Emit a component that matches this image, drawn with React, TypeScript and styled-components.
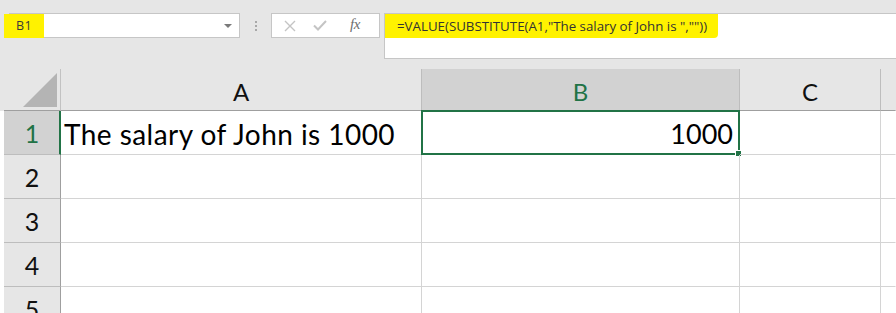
import React from "react";
import styled, { createGlobalStyle } from "styled-components";

const Global = createGlobalStyle`
  html, body {
    margin: 0;
    padding: 0;
    width: 896px;
    height: 313px;
    overflow: hidden;
    background: #e6e6e6;
  }
`;

const GREEN = "#217346";
const HEADER_BG = "#e6e6e6";
const HEADER_SEL = "#d2d2d2";
const GRID_LINE = "#d4d4d4";

const S = {
  Page: styled.div`
    width: 896px;
    height: 313px;
    overflow: hidden;
    font-family: "Open Sans", "Liberation Sans", sans-serif;
  `,
  Toolbar: styled.div`
    height: 69px;
    box-sizing: border-box;
    padding: 13px 0 0 9px;
    display: flex;
    align-items: flex-start;
  `,
  NameBox: styled.div`
    width: 231px;
    height: 25px;
    box-sizing: border-box;
    background: #fff;
    border: 1px solid #c6c6c6;
    display: flex;
    align-items: center;
    justify-content: space-between;
  `,
  NameText: styled.span`
    margin-left: -6px;
    height: 24px;
    width: 40px;
    box-sizing: border-box;
    padding-left: 12px;
    background: #fff200;
    display: flex;
    align-items: center;
    font-size: 12.5px;
    color: #3a3a3a;
    letter-spacing: 0.4px;
  `,
  Caret: styled.span`
    margin-right: 7px;
    width: 0;
    height: 0;
    border-left: 4px solid transparent;
    border-right: 4px solid transparent;
    border-top: 4px solid #7a7a7a;
  `,
  Dots: styled.div`
    width: 31px;
    height: 25px;
    display: flex;
    flex-direction: column;
    align-items: center;
    justify-content: center;
    gap: 2px;
    span {
      width: 2px;
      height: 2px;
      background: #a8a8a8;
    }
  `,
  IconBox: styled.div`
    width: 109px;
    height: 25px;
    box-sizing: border-box;
    background: #fff;
    border: 1px solid #c6c6c6;
    display: flex;
    align-items: center;
    padding-left: 12px;
    gap: 17px;
  `,
  Fx: styled.span`
    margin-left: 6px;
    font-family: "Liberation Serif", "DejaVu Serif", serif;
    font-style: italic;
    font-size: 15px;
    color: #6e6e6e;
    letter-spacing: -0.5px;
    margin-top: -2px;
  `,
  FormulaBox: styled.div`
    margin-left: 4px;
    flex: 1;
    height: 46px;
    box-sizing: border-box;
    background: #fff;
    border: 1px solid #c6c6c6;
    border-right: none;
  `,
  Formula: styled.span`
    display: inline-flex;
    align-items: center;
    height: 24px;
    padding: 0 11px 0 12px;
    background: #fff200;
    border-radius: 0 0 4px 0;
    font-size: 13.3px;
    color: #333;
    white-space: pre;
  `,
  Grid: styled.div`
    display: grid;
    grid-template-columns: 4px 57px 361px 318px 141px 1fr;
    grid-auto-rows: 44px;
    grid-template-rows: 42px;
    background: #fff;
    font-family: "Lato", "Open Sans", sans-serif;
  `,
  Spacer: styled.div<{ $header?: boolean }>`
    background: ${(p) => (p.$header ? HEADER_BG : "#fff")};
  `,
  Corner: styled.div`
    background: ${HEADER_BG};
    border-right: 1px solid #c2c2c2;
    border-bottom: 1px solid #9f9f9f;
    box-sizing: border-box;
    display: flex;
    align-items: flex-end;
    justify-content: flex-end;
    padding: 0 3px 3px 0;
  `,
  ColHead: styled.div<{ $sel?: boolean; $last?: boolean }>`
    background: ${(p) => (p.$sel ? HEADER_SEL : HEADER_BG)};
    color: ${(p) => (p.$sel ? GREEN : "#111")};
    border-right: 1px solid ${(p) => (p.$last ? "transparent" : "#bdbdbd")};
    border-bottom: 1px solid #9f9f9f;
    box-sizing: border-box;
    display: flex;
    align-items: center;
    justify-content: center;
    font-size: 24px;
    padding-top: 4px;
  `,
  RowHead: styled.div<{ $sel?: boolean }>`
    background: ${(p) => (p.$sel ? HEADER_SEL : HEADER_BG)};
    color: ${(p) => (p.$sel ? GREEN : "#111")};
    border-right: ${(p) => (p.$sel ? `2px solid ${GREEN}` : "1px solid #9f9f9f")};
    border-bottom: 1px solid #bdbdbd;
    box-sizing: border-box;
    display: flex;
    align-items: center;
    justify-content: center;
    padding-left: ${(p) => (p.$sel ? "1px" : "0")};
    font-size: 25px;
  `,
  Cell: styled.div<{ $align?: "left" | "right"; $last?: boolean }>`
    position: relative;
    border-right: 1px solid ${(p) => (p.$last ? "transparent" : GRID_LINE)};
    border-bottom: 1px solid ${GRID_LINE};
    box-sizing: border-box;
    display: flex;
    align-items: center;
    justify-content: ${(p) => (p.$align === "right" ? "flex-end" : "flex-start")};
    padding: 2px 6px 0 3px;
    font-size: 27px;
    color: #000;
    white-space: nowrap;
  `,
  // Lato is a touch narrower than Calibri for text, so widen it a bit
  CellText: styled.span`
    font-size: 28px;
    letter-spacing: 0.45px;
  `,
  Selection: styled.div`
    position: absolute;
    left: -1px;
    top: -1px;
    right: -1px;
    bottom: -1px;
    border: 2px solid ${GREEN};
    pointer-events: none;
    &::after {
      content: "";
      position: absolute;
      right: -4px;
      bottom: -4px;
      width: 5px;
      height: 5px;
      background: ${GREEN};
      border: 1px solid #fff;
    }
  `,
};

const CloseIcon = () => (
  <svg width="12" height="12" viewBox="0 0 12 12">
    <path d="M1 1 L11 11 M11 1 L1 11" stroke="#c4c4c4" strokeWidth="1.4" />
  </svg>
);

const CheckIcon = () => (
  <svg width="14" height="11" viewBox="0 0 14 11">
    <path d="M1 5.5 L5 9.5 L13 1" stroke="#c4c4c4" strokeWidth="2" fill="none" />
  </svg>
);

const CornerTriangle = () => (
  <svg width="34" height="34" viewBox="0 0 34 34">
    <polygon points="34,0 34,34 0,34" fill="#b4b4b4" />
  </svg>
);

const columns = ["A", "B", "C"];
const rows = [1, 2, 3, 4, 5];

const App: React.FC = () => {
  return (
    <S.Page>
      <Global />
      <S.Toolbar>
        <S.NameBox>
          <S.NameText>B1</S.NameText>
          <S.Caret />
        </S.NameBox>
        <S.Dots>
          <span />
          <span />
          <span />
        </S.Dots>
        <S.IconBox>
          <CloseIcon />
          <CheckIcon />
          <S.Fx>fx</S.Fx>
        </S.IconBox>
        <S.FormulaBox>
          <S.Formula>=VALUE(SUBSTITUTE(A1,"The salary of John is ",""))</S.Formula>
        </S.FormulaBox>
      </S.Toolbar>
      <S.Grid>
        <S.Spacer $header />
        <S.Corner>
          <CornerTriangle />
        </S.Corner>
        {columns.map((c) => (
          <S.ColHead key={c} $sel={c === "B"}>
            {c}
          </S.ColHead>
        ))}
        <S.ColHead $last />
        {rows.map((r) => (
          <React.Fragment key={r}>
            <S.Spacer />
            <S.RowHead $sel={r === 1}>{r}</S.RowHead>
            <S.Cell>{r === 1 && <S.CellText>The salary of John is 1000</S.CellText>}</S.Cell>
            <S.Cell $align="right">
              {r === 1 ? "1000" : ""}
              {r === 1 && <S.Selection />}
            </S.Cell>
            <S.Cell />
            <S.Cell $last />
          </React.Fragment>
        ))}
      </S.Grid>
    </S.Page>
  );
};

export default App;
